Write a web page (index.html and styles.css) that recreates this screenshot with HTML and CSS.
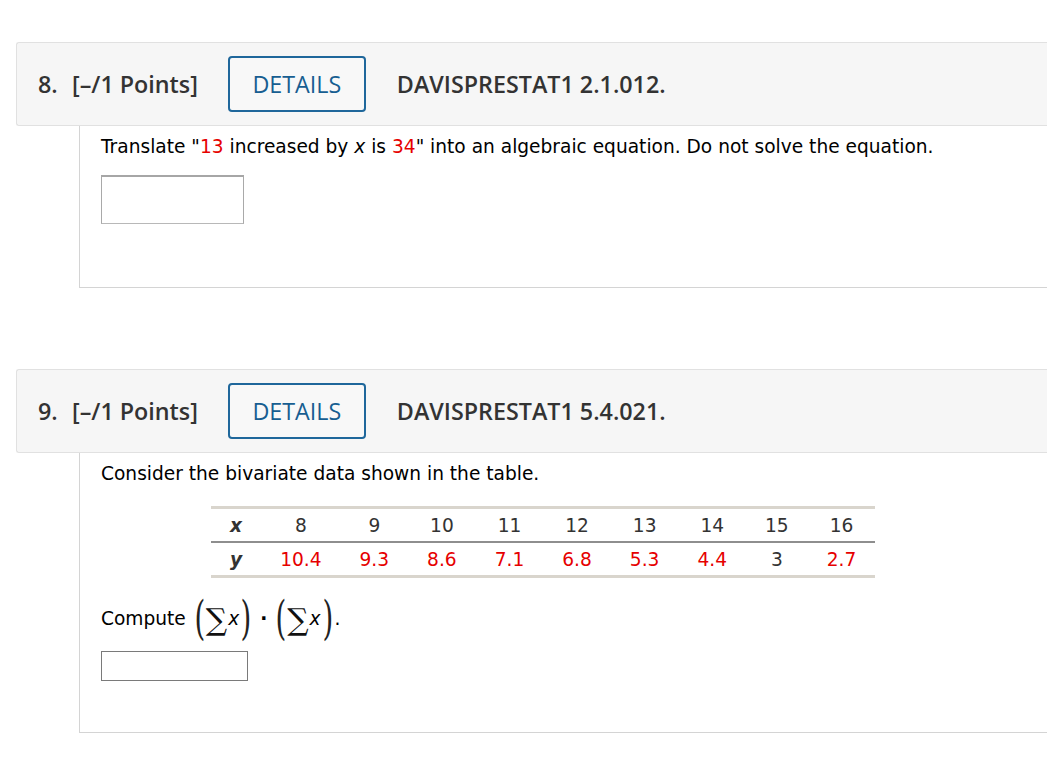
FILE: index.html
```html
<!DOCTYPE html>
<html>
<head>
<meta charset="utf-8">
<link rel="stylesheet" href="styles.css">
</head>
<body>
<div class="page">
  <div class="question q8">
    <div class="qhead">
      <span class="qnum">8.</span>
      <span class="qpts">[–/1 Points]</span>
      <span class="details">DETAILS</span>
      <span class="qref">DAVISPRESTAT1 2.1.012.</span>
    </div>
    <div class="qbody">
      <p class="prompt">Translate "<span class="red">13</span> increased by <i>x</i> is <span class="red">34</span>" into an algebraic equation. Do not solve the equation.</p>
      <div class="answer big"></div>
    </div>
  </div>

  <div class="question q9">
    <div class="qhead">
      <span class="qnum">9.</span>
      <span class="qpts">[–/1 Points]</span>
      <span class="details">DETAILS</span>
      <span class="qref">DAVISPRESTAT1 5.4.021.</span>
    </div>
    <div class="qbody">
      <p class="prompt">Consider the bivariate data shown in the table.</p>
      <table class="data">
        <tr class="rx">
          <th>x</th><td>8</td><td>9</td><td>10</td><td>11</td><td>12</td><td>13</td><td>14</td><td>15</td><td>16</td>
        </tr>
        <tr class="ry">
          <th>y</th><td class="red">10.4</td><td class="red">9.3</td><td class="red">8.6</td><td class="red">7.1</td><td class="red">6.8</td><td class="red">5.3</td><td class="red">4.4</td><td>3</td><td class="red">2.7</td>
        </tr>
      </table>
      <p class="compute">Compute <span class="math"><span class="paren">(</span><span class="sigma">∑</span><i class="mx">x</i><span class="paren">)</span><span class="dot">·</span><span class="paren">(</span><span class="sigma">∑</span><i class="mx">x</i><span class="paren">)</span><span class="period">.</span></span></p>
      <div class="answer small"></div>
    </div>
  </div>
</div>
</body>
</html>
```

FILE: styles.css
```css
html, body {
  margin: 0;
  padding: 0;
  background: #ffffff;
  overflow: hidden;
}
body {
  width: 1047px;
  height: 764px;
}
.page {
  box-sizing: border-box;
  padding-top: 42px;
  padding-left: 16px;
  width: 1047px;
}
.q8 {
  margin-bottom: 81px;
}
.qhead {
  box-sizing: border-box;
  height: 84px;
  background: #f6f6f6;
  border: 1px solid #e1e1e1;
  border-right: none;
  border-radius: 3px 0 0 3px;
  display: flex;
  align-items: center;
  padding-left: 21px;
  font-family: "Open Sans", "Liberation Sans", sans-serif;
  font-size: 23.3px;
  color: #333333;
  white-space: nowrap;
}
.qnum {
  font-weight: 600;
  width: 34px;
}
.qpts {
  font-weight: 600;
  margin-right: 30px;
}
.details {
  box-sizing: border-box;
  height: 56px;
  width: 138px;
  border: 2px solid #1f679b;
  border-radius: 4px;
  display: flex;
  align-items: center;
  justify-content: center;
  color: #175e91;
  font-weight: 400;
  margin-right: 31px;
  background: #f8f8f8;
}
.qref {
  font-weight: 600;
}
.qbody {
  margin-left: 63px;
  border-left: 1px solid #d4d4d4;
  border-bottom: 1px solid #d4d4d4;
  padding: 9px 0 0 21px;
  font-family: Verdana, "DejaVu Sans", sans-serif;
  font-size: 18.6px;
  color: #000000;
}
.q8 .qbody {
  height: 152px;
}
.q9 .qbody {
  height: 270px;
}
.prompt {
  margin: 0;
  line-height: 24px;
  white-space: nowrap;
}
.red {
  color: #e60000;
}
.answer {
  box-sizing: border-box;
  background: #fff;
}
.answer.big {
  margin-top: 16px;
  width: 143px;
  height: 49px;
  border: 1px solid #a9a9a9;
  border-top: 2px solid #a6a6a6;
  border-bottom: 1px solid #b8b8b8;
}
.answer.small {
  margin-top: 12px;
  width: 147px;
  height: 30px;
  border: 1px solid #7a7a7a;
}
.data {
  border-collapse: collapse;
  margin-left: 110px;
  margin-top: 20px;
  border-top: 3px solid #d9d5cd;
  border-bottom: 3px solid #d9d5cd;
  color: #333333;
}
.data th, .data td {
  height: 32px;
  padding: 0 19px;
  text-align: center;
  font-weight: 400;
}
.data th {
  font-weight: 700;
  font-style: italic;
}
.data .rx th, .data .rx td {
  border-bottom: 2px solid #8e8e8e;
}
.data td.red {
  color: #e60000;
}
.compute {
  margin: 19px 0 0 0;
  height: 42px;
  display: flex;
  align-items: center;
}
.math {
  display: inline-flex;
  align-items: center;
  margin-left: 8px;
}
.paren {
  font-family: "DejaVu Serif", "Liberation Serif", serif;
  font-size: 46px;
  font-weight: 200;
  color: #222;
  line-height: 42px;
  transform: scaleX(0.6);
  margin: 0 -3px;
}
.sigma {
  font-family: "DejaVu Serif", "Liberation Serif", serif;
  font-size: 30px;
  margin: 2px 1px 0 0;
  color: #111;
}
.mx {
  font-family: Verdana, "DejaVu Sans", sans-serif;
  font-size: 18.6px;
  margin-right: 1px;
}
.dot {
  margin: 0 8px;
  font-weight: 700;
}
.period {
  margin-left: 1px;
}
```
